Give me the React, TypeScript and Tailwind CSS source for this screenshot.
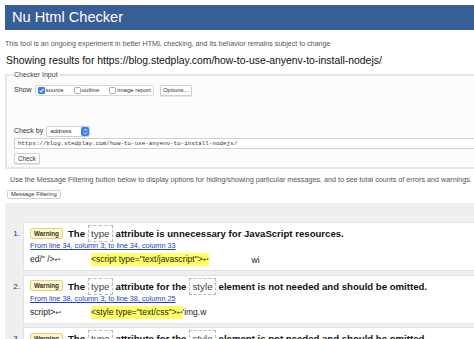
import React from "react";

const Check = () => (
  <svg width="7" height="7" viewBox="0 0 7 7" className="block">
    <rect x="0" y="0" width="7" height="7" rx="1.2" fill="#3a7fe0" />
    <path d="M1.6 3.6 L3 5 L5.5 1.9" stroke="white" strokeWidth="1.1" fill="none" />
  </svg>
);

const Box = () => (
  <span className="block w-[7px] h-[7px] border border-[#aaa] rounded-[1.5px] bg-white" />
);

const Code = ({ children }: { children: React.ReactNode }) => (
  <span className="border border-dashed border-[#b8b8b8] px-[2px] py-[2px] text-[9.8px] font-normal text-[#444] mx-[3px]">
    {children}
  </span>
);

const Badge = () => (
  <span className="inline-block align-middle -mt-[2px] bg-[#fff6c8] border border-[#e3d27e] rounded-[2px] px-[3px] text-[6.3px] font-bold leading-[9px] text-[#333] mr-[5px]">
    Warning
  </span>
);

const Ret = () => <span className="font-['DejaVu_Sans'] text-[7px] text-[#333]">↩</span>;

type Msg = {
  n: string;
  title: React.ReactNode;
  loc: string;
  pre: string;
  hl: string;
  post: string;
  postGap: string;
};

const msgs: Msg[] = [
  {
    n: "1.",
    title: (
      <>
        The<Code>type</Code>attribute is unnecessary for JavaScript resources.
      </>
    ),
    loc: "From line 34, column 3; to line 34, column 33",
    pre: 'ed/" />',
    hl: '<script type="text/javascript">',
    post: "wi",
    postGap: "ml-[43px]",
  },
  {
    n: "2.",
    title: (
      <>
        The<Code>type</Code>attribute for the<Code>style</Code>element is not needed and should be omitted.
      </>
    ),
    loc: "From line 38, column 3; to line 38, column 25",
    pre: "script>",
    hl: '<style type="text/css">',
    post: "'img.w",
    postGap: "ml-0",
  },
  {
    n: "3.",
    title: (
      <>
        The<Code>type</Code>attribute for the<Code>style</Code>element is not needed and should be omitted.
      </>
    ),
    loc: "From line 41, column 3; to line 41, column 25",
    pre: "",
    hl: "",
    post: "",
    postGap: "ml-0",
  },
];

export default function App() {
  return (
    <div className="w-[474px] h-[339px] overflow-hidden bg-white font-['Liberation_Sans',Arial,sans-serif] text-[#222]">
      <div className="ml-[5px] mt-[5px] h-[25px] bg-[#375e96] text-white text-[14.6px] leading-[25px] pl-[7px] whitespace-nowrap">
        Nu Html Checker
      </div>
      <p className="ml-[5px] mt-[9px] text-[7.1px] leading-[10px] text-[#555] whitespace-nowrap">
        This tool is an ongoing experiment in better HTML checking, and its behavior remains subject to change
      </p>
      <p className="ml-[6px] mt-[5px] text-[10.4px] leading-[14px] text-[#111] whitespace-nowrap">
        Showing results for https://blog.stedplay.com/how-to-use-anyenv-to-install-nodejs/
      </p>
      <fieldset className="ml-[5px] mt-[2px] border-2 border-r-0 border-[#e6e6e6] pl-[7px] h-[99px] bg-[#fcfcfc]">
        <legend className="text-[7px] leading-[10px] text-[#444] px-[1px] -ml-[1px]">Checker Input</legend>
        <div className="flex items-center h-[12px] mt-[4px] text-[7px] text-[#333] whitespace-nowrap">
          <span className="mr-[3px]">Show</span>
          <div className="flex items-center h-[11px] border border-[#d8d8d8] rounded-[2px] pl-[2px] pr-[2px] text-[6px] text-[#333] bg-white">
            <Check />
            <span className="ml-[1px] mr-[10px]">source</span>
            <Box />
            <span className="ml-[1px] mr-[10px]">outline</span>
            <Box />
            <span className="ml-[1px]">image report</span>
          </div>
          <span className="ml-[6px] h-[11px] px-[2px] leading-[9px] border border-[#cfcfcf] rounded-[2px] bg-white text-[6px] shadow-[0_0.5px_0_#ccc]">
            Options...
          </span>
        </div>
        <div className="flex items-center mt-[30px] h-[11px] text-[7px] text-[#333] whitespace-nowrap">
          <span className="mr-[3px]">Check by</span>
          <div className="flex items-center justify-between w-[44px] h-[11px] border border-[#cfcfcf] rounded-[2px] bg-white pl-[3px] text-[6px]">
            <span>address</span>
            <span className="w-[8px] h-[9px] bg-[#3c82e6] rounded-[2px] flex items-center justify-center">
              <svg width="5" height="7" viewBox="0 0 5 7">
                <path d="M1 2.6 L2.5 1.1 L4 2.6 M1 4.4 L2.5 5.9 L4 4.4" stroke="white" strokeWidth="0.9" fill="none" />
              </svg>
            </span>
          </div>
        </div>
        <div className="h-[11px] mt-[1px] border border-[#d0d0d0] border-r-0 bg-white pl-[3px] font-['Liberation_Mono',monospace] text-[5.9px] leading-[9px] text-[#333] whitespace-nowrap">
          https://blog.stedplay.com/how-to-use-anyenv-to-install-nodejs/
        </div>
        <div className="mt-[4px] w-fit h-[11px] px-[3px] border border-[#cfcfcf] rounded-[2px] bg-white text-[6.3px] leading-[9px] text-[#333] shadow-[0_0.5px_0_#ccc]">
          Check
        </div>
      </fieldset>
      <p className="ml-[10px] mt-[6px] text-[7.2px] leading-[10px] text-[#555] whitespace-nowrap">
        Use the Message Filtering button below to display options for hiding/showing particular messages, and to see total counts of errors and warnings.
      </p>
      <div className="ml-[7px] mt-[5px] w-fit h-[9px] px-[3px] border border-[#cfcfcf] rounded-[2px] bg-white text-[5.8px] leading-[7px] text-[#333] whitespace-nowrap">
        Message Filtering
      </div>
      <div className="ml-[5px] mt-[4px] bg-[#efefef] pt-[19px] h-[200px]">
        {msgs.map((m, i) => (
          <div key={i} className="flex mb-[3.5px]">
            <div className="w-[18px] text-right pr-[3px] pt-[6px] text-[8px] leading-[12px] text-[#333]">{m.n}</div>
            <div className="flex-1 h-[49px] bg-white border border-[#e2e2e2] border-r-0 pl-[6px] pt-[3px] whitespace-nowrap">
              <div className="text-[9.6px] leading-[16px] font-bold text-[#111]">
                <Badge />
                {m.title}
              </div>
              <div className="text-[7.3px] leading-[8px] text-[#2440c8] underline">{m.loc}</div>
              <div className="flex items-center text-[8.5px] leading-[12px] text-[#222] mt-[3px]">
                <span className="w-[61px]">
                  {m.pre}
                  {m.pre && <Ret />}
                </span>
                {m.hl && (
                  <span className="bg-[#ffff66]">
                    {m.hl}
                    <Ret />
                  </span>
                )}
                <span className={m.postGap}>{m.post}</span>
              </div>
            </div>
          </div>
        ))}
      </div>
    </div>
  );
}
